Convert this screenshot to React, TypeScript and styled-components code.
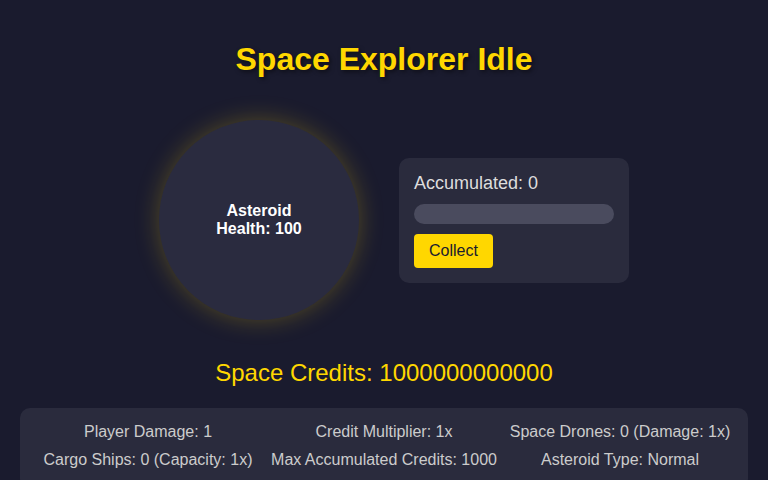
import styled, { createGlobalStyle } from 'styled-components';

const GlobalStyle = createGlobalStyle`
  html, body {
    margin: 0;
    padding: 0;
    background: #1a1b2e;
    font-family: "Liberation Sans", Arial, sans-serif;
  }
`;

const Page = styled.div`
  display: flex;
  flex-direction: column;
  align-items: center;
  padding: 41px 20px 0;
  min-height: 480px;
  box-sizing: border-box;
`;

const Title = styled.h1`
  margin: 0;
  font-size: 32px;
  line-height: 37px;
  font-weight: bold;
  color: #ffd700;
  text-shadow: 2px 2px 4px rgba(0, 0, 0, 0.5);
`;

const PlayArea = styled.div`
  display: flex;
  align-items: center;
  justify-content: center;
  gap: 20px;
  margin-top: 42px;
`;

const Asteroid = styled.div`
  width: 200px;
  height: 200px;
  margin: 0 20px;
  border-radius: 50%;
  background: #2a2b3f;
  box-shadow: 0 0 24px rgba(255, 215, 0, 0.25);
  display: flex;
  flex-direction: column;
  align-items: center;
  justify-content: center;
  color: #fff;
  font-weight: bold;
  font-size: 16px;
  line-height: 18px;
  cursor: pointer;
`;

const CollectorCard = styled.div`
  width: 230px;
  box-sizing: border-box;
  padding: 15px;
  border-radius: 10px;
  background: #2a2b3d;
  display: flex;
  flex-direction: column;
  align-items: flex-start;
`;

const Accumulated = styled.div`
  font-size: 18px;
  line-height: 20px;
  color: #ddd;
`;

const Bar = styled.div`
  width: 200px;
  height: 20px;
  margin-top: 11px;
  border-radius: 10px;
  background: #4a4b5e;
  overflow: hidden;
`;

const BarFill = styled.div`
  height: 100%;
  background: #ffd700;
`;

const CollectButton = styled.button`
  margin-top: 10px;
  height: 34px;
  padding: 0 15px;
  border: none;
  border-radius: 4px;
  background: #ffd700;
  color: #1a1b2e;
  font-family: inherit;
  font-size: 16px;
  cursor: pointer;
`;

const Credits = styled.div`
  margin-top: 39px;
  font-size: 24px;
  line-height: 28px;
  color: #ffd700;
`;

const StatsPanel = styled.div`
  margin-top: 21px;
  width: 100%;
  box-sizing: border-box;
  padding: 15px 15px 20px;
  border-radius: 10px;
  background: #2a2b3d;
  display: grid;
  grid-template-columns: repeat(3, 1fr);
  column-gap: 10px;
  row-gap: 10px;
`;

const Stat = styled.div`
  text-align: center;
  font-size: 16px;
  line-height: 18px;
  color: #ccc;
  white-space: nowrap;
`;

const stats = [
  'Player Damage: 1',
  'Credit Multiplier: 1x',
  'Space Drones: 0 (Damage: 1x)',
  'Cargo Ships: 0 (Capacity: 1x)',
  'Max Accumulated Credits: 1000',
  'Asteroid Type: Normal',
];

export default function App() {
  const accumulated = 0;
  const maxAccumulated = 1000;

  return (
    <>
      <GlobalStyle />
      <Page>
        <Title>Space Explorer Idle</Title>
        <PlayArea>
          <Asteroid>
            <div>Asteroid</div>
            <div>Health: 100</div>
          </Asteroid>
          <CollectorCard>
            <Accumulated>Accumulated: {accumulated}</Accumulated>
            <Bar>
              <BarFill style={{ width: `${(accumulated / maxAccumulated) * 100}%` }} />
            </Bar>
            <CollectButton>Collect</CollectButton>
          </CollectorCard>
        </PlayArea>
        <Credits>Space Credits: 1000000000000</Credits>
        <StatsPanel>
          {stats.map((s) => (
            <Stat key={s}>{s}</Stat>
          ))}
        </StatsPanel>
      </Page>
    </>
  );
}
